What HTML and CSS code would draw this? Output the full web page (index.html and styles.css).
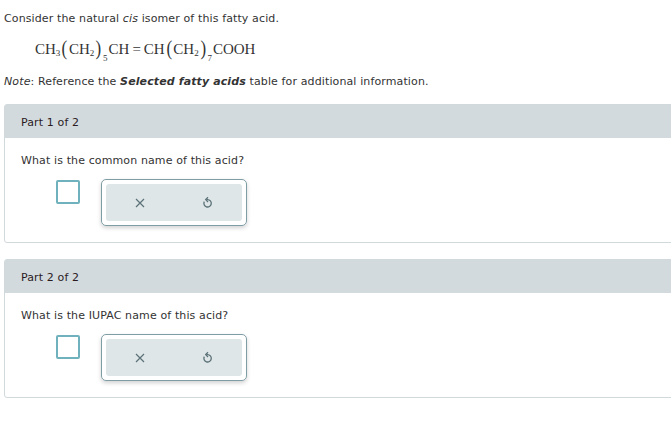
FILE: index.html
```html
<!DOCTYPE html>
<html>
<head>
<meta charset="utf-8">
<link rel="stylesheet" href="styles.css">
</head>
<body>
<p class="intro">Consider the natural <i>cis</i> isomer of this fatty acid.</p>
<div class="formula">CH<sub>3</sub><span class="par">(</span>CH<sub>2</sub><span class="par">)</span><sub class="low">5</sub>CH<span class="eq">=</span>CH<span class="par">(</span>CH<sub>2</sub><span class="par">)</span><sub class="low">7</sub>COOH</div>
<p class="note"><i>Note</i>: Reference the <b><i>Selected fatty acids</i></b> table for additional information.</p>

<section class="card">
  <div class="card-head">Part 1 of 2</div>
  <div class="card-body">
    <p class="question">What is the common name of this acid?</p>
    <div class="answer">
      <div class="box"></div>
      <div class="tools">
        <div class="tools-inner">
          <svg class="ico" width="10" height="10" viewBox="0 0 10 10"><path d="M1 1L9 9M9 1L1 9" stroke="#5b7278" stroke-width="1.2" fill="none"/></svg>
          <svg class="ico" width="11" height="13" viewBox="0 0 11 13"><path d="M2.3 5.6A3.7 3.7 0 1 0 5.6 3.6H4.4" stroke="#5b7278" stroke-width="1.3" fill="none"/><path d="M6 1.2L3.7 3.6L6 6" stroke="#5b7278" stroke-width="1.3" fill="none"/></svg>
        </div>
      </div>
    </div>
  </div>
</section>

<section class="card">
  <div class="card-head">Part 2 of 2</div>
  <div class="card-body">
    <p class="question">What is the IUPAC name of this acid?</p>
    <div class="answer">
      <div class="box"></div>
      <div class="tools">
        <div class="tools-inner">
          <svg class="ico" width="10" height="10" viewBox="0 0 10 10"><path d="M1 1L9 9M9 1L1 9" stroke="#5b7278" stroke-width="1.2" fill="none"/></svg>
          <svg class="ico" width="11" height="13" viewBox="0 0 11 13"><path d="M2.3 5.6A3.7 3.7 0 1 0 5.6 3.6H4.4" stroke="#5b7278" stroke-width="1.3" fill="none"/><path d="M6 1.2L3.7 3.6L6 6" stroke="#5b7278" stroke-width="1.3" fill="none"/></svg>
        </div>
      </div>
    </div>
  </div>
</section>
</body>
</html>
```
FILE: styles.css
```css
html, body { margin: 0; padding: 0; background: #fff; }
body {
  padding: 0 0 0 4px;
  font-family: "DejaVu Sans", Verdana, sans-serif;
  font-size: 11px;
  line-height: 16px;
  letter-spacing: 0.12px;
  color: #333;
  overflow: hidden;
}
p { margin: 0; }
.intro { margin-top: 11px; }
.formula {
  margin: 9px 0 0 31px;
  font-family: "Liberation Serif", "DejaVu Serif", serif;
  font-size: 15px;
  line-height: 24px;
  height: 24px;
  letter-spacing: 0;
  color: #333;
  white-space: nowrap;
}
.formula sub { font-size: 9px; vertical-align: -2px; line-height: 0; }
.formula sub.low { vertical-align: -7px; margin: 0 1px 0 0; }
.formula .par { font-size: 20px; vertical-align: -1px; display: inline-block; margin: 0 1px; transform: scaleX(0.85); }
.formula .eq { margin: 0 3px; }
.note { margin-top: 14px; }
.card {
  margin-top: 14px;
  margin-right: -10px;
  border: 1px solid #d2d9dc;
  border-radius: 3px;
}
.card + .card { margin-top: 16px; }
.card-head {
  background: #d3dadd;
  height: 33px;
  line-height: 35px;
  padding-left: 16px;
  color: #2b1a1f;
}
.card-body {
  padding: 15px 16px 16px;
}
.question { line-height: 16px; }
.answer {
  display: flex;
  align-items: flex-start;
  margin-top: 10px;
  margin-left: 35px;
  gap: 21px;
}
.box {
  width: 20px;
  height: 20px;
  margin-top: 1px;
  border: 2px solid #6fb1bc;
  border-radius: 2px;
}
.tools {
  width: 136px;
  height: 37px;
  padding: 4px;
  border: 1px solid #7f9da4;
  border-radius: 5px;
  box-shadow: 0 2px 4px rgba(0,0,0,0.18);
}
.tools-inner {
  height: 37px;
  background: #dfe6e8;
  border-radius: 3px;
  display: flex;
  align-items: center;
  justify-content: space-between;
  padding: 0 29px 0 29px;
}
.ico { display: block; }
```
